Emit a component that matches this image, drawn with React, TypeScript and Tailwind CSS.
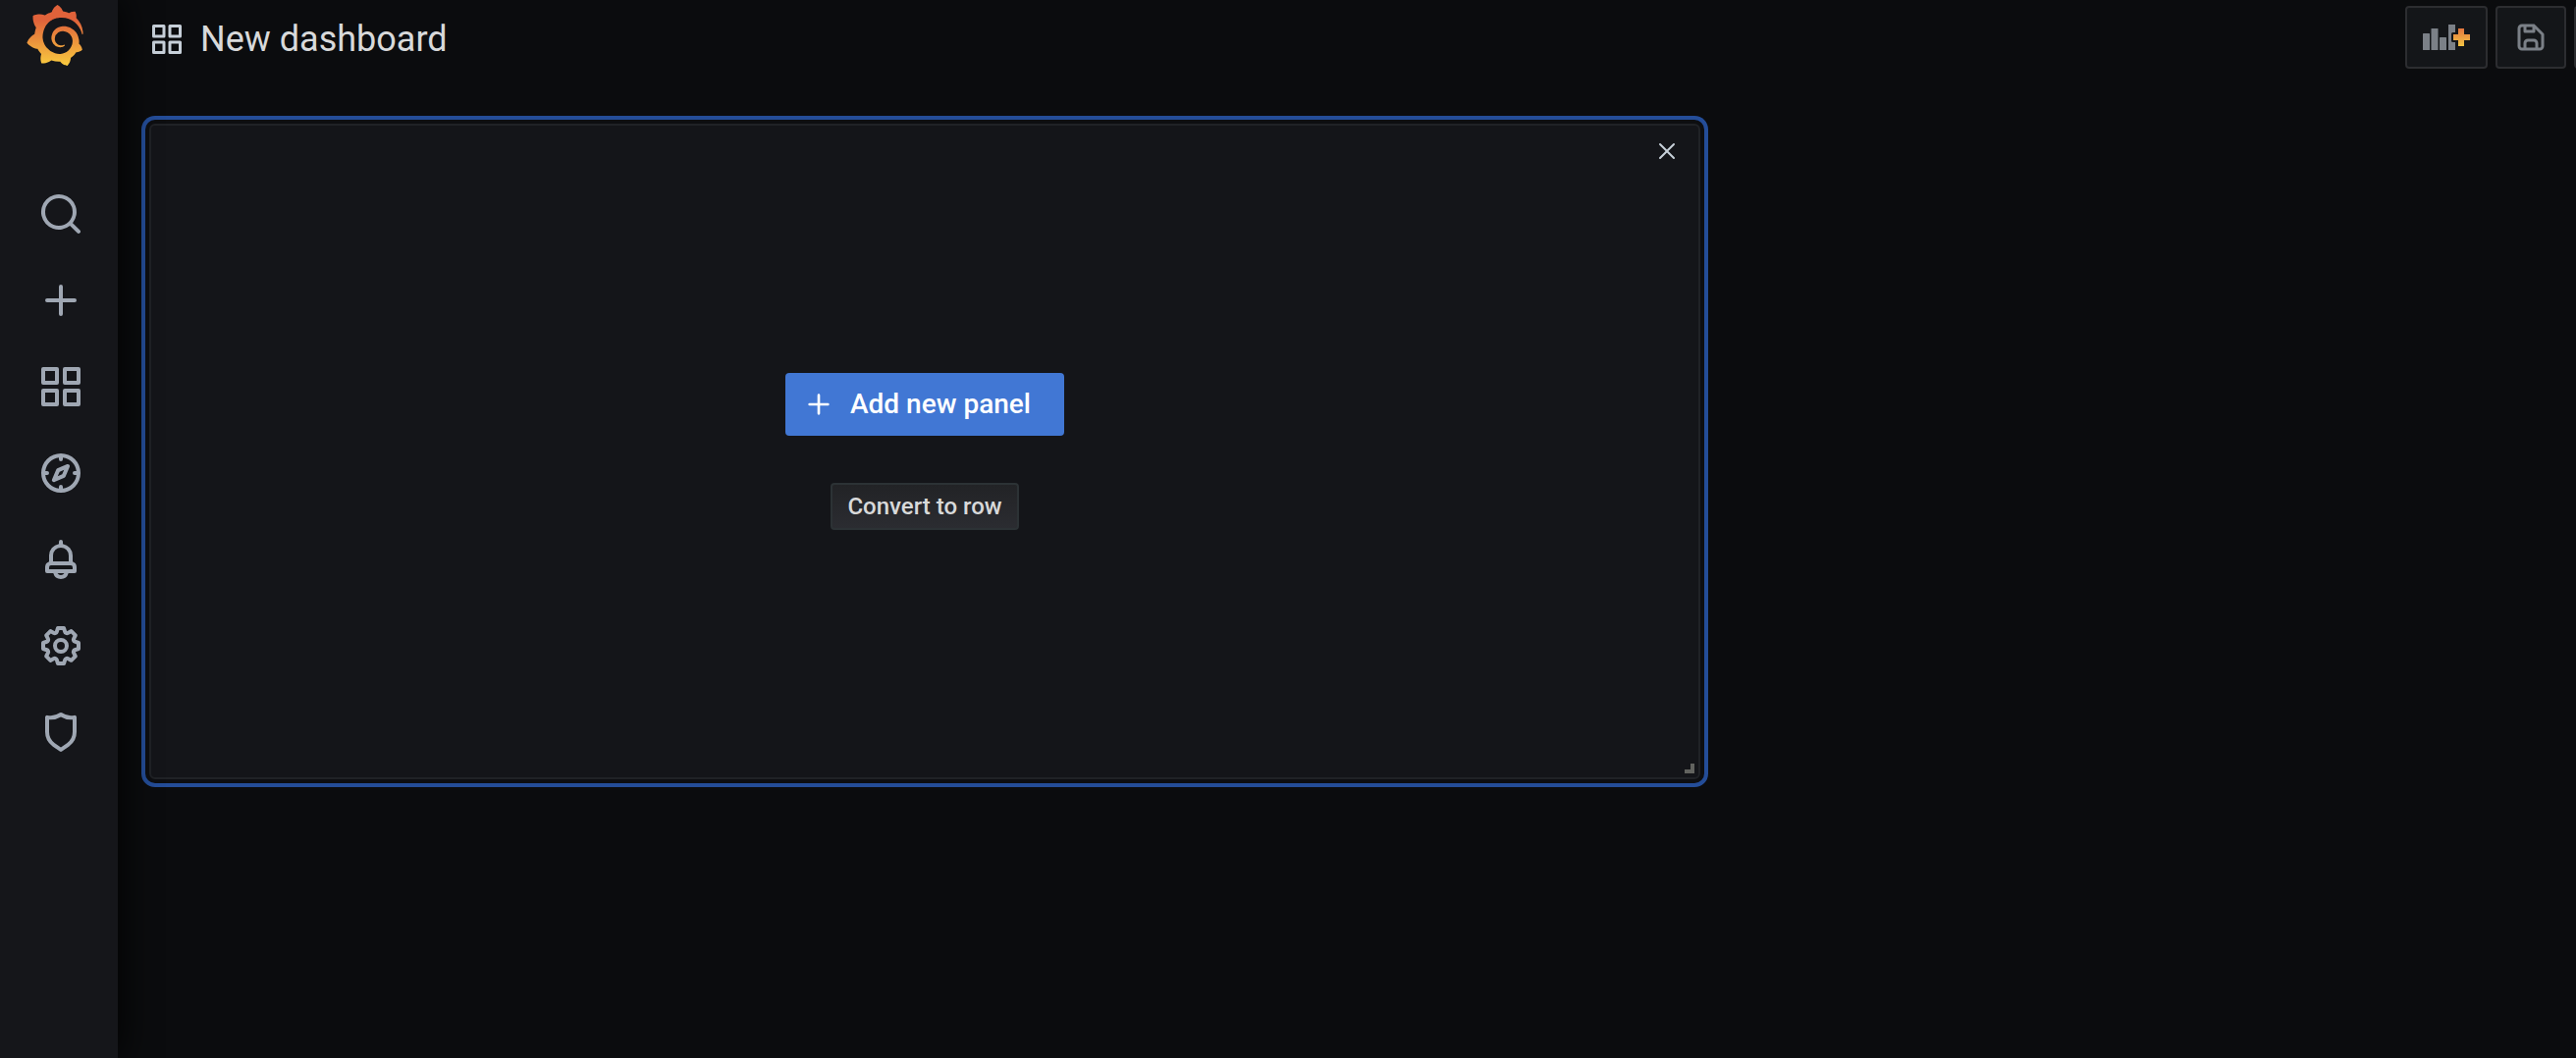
import React from 'react';
import { SiGrafana } from 'react-icons/si';

const icons = {
  search:
    'M21.71,20.29,18,16.61A9,9,0,1,0,16.61,18l3.68,3.68a1,1,0,0,0,1.42,0A1,1,0,0,0,21.71,20.29ZM11,18a7,7,0,1,1,7-7A7,7,0,0,1,11,18Z',
  plus: 'M19,11H13V5a1,1,0,0,0-2,0v6H5a1,1,0,0,0,0,2h6v6a1,1,0,0,0,2,0V13h6a1,1,0,0,0,0-2Z',
  apps: 'M10,13H3a1,1,0,0,0-1,1v7a1,1,0,0,0,1,1h7a1,1,0,0,0,1-1V14A1,1,0,0,0,10,13ZM9,20H4V15H9ZM21,2H14a1,1,0,0,0-1,1v7a1,1,0,0,0,1,1h7a1,1,0,0,0,1-1V3A1,1,0,0,0,21,2ZM20,9H15V4h5Zm1,4H14a1,1,0,0,0-1,1v7a1,1,0,0,0,1,1h7a1,1,0,0,0,1-1V14A1,1,0,0,0,21,13Zm-1,7H15V15h5ZM10,2H3A1,1,0,0,0,2,3v7a1,1,0,0,0,1,1h7a1,1,0,0,0,1-1V3A1,1,0,0,0,10,2ZM9,9H4V4H9Z',
  compass:
    'M12,2A10,10,0,1,0,22,12,10,10,0,0,0,12,2Zm1,17.93V19a1,1,0,0,0-2,0v.93A8,8,0,0,1,4.07,13H5a1,1,0,0,0,0-2H4.07A8,8,0,0,1,11,4.07V5a1,1,0,0,0,2,0V4.07A8,8,0,0,1,19.93,11H19a1,1,0,0,0,0,2h.93A8,8,0,0,1,13,19.93ZM15.14,7.55l-5,2.12a1,1,0,0,0-.52.52l-2.12,5a1,1,0,0,0,.21,1.1,1,1,0,0,0,.7.3.93.93,0,0,0,.4-.09l5-2.12a1,1,0,0,0,.52-.52l2.12-5a1,1,0,0,0-1.31-1.31Zm-2.49,5.1-2.28,1,1-2.28,2.28-1Z',
  bell: 'M18,13.18V10a6,6,0,0,0-5-5.91V3a1,1,0,0,0-2,0V4.09A6,6,0,0,0,6,10v3.18A3,3,0,0,0,4,16v2a1,1,0,0,0,1,1H8.14a4,4,0,0,0,7.72,0H19a1,1,0,0,0,1-1V16A3,3,0,0,0,18,13.18ZM8,10a4,4,0,0,1,8,0v3H8Zm4,10a2,2,0,0,1-1.72-1h3.44A2,2,0,0,1,12,20Zm6-3H6V16a1,1,0,0,1,1-1H17a1,1,0,0,1,1,1Z',
  cog: 'M21.32,9.55l-1.89-.63.89-1.78A1,1,0,0,0,20.13,6L18,3.87a1,1,0,0,0-1.15-.19l-1.78.89-.63-1.89A1,1,0,0,0,13.5,2h-3a1,1,0,0,0-.95.68L8.92,4.57,7.14,3.68A1,1,0,0,0,6,3.87L3.87,6a1,1,0,0,0-.19,1.15l.89,1.78-1.89.63A1,1,0,0,0,2,10.5v3a1,1,0,0,0,.68.95l1.89.63-.89,1.78A1,1,0,0,0,3.87,18L6,20.13a1,1,0,0,0,1.15.19l1.78-.89.63,1.89a1,1,0,0,0,.95.68h3a1,1,0,0,0,.95-.68l.63-1.89,1.78.89A1,1,0,0,0,18,20.13L20.13,18a1,1,0,0,0,.19-1.15l-.89-1.78,1.89-.63A1,1,0,0,0,22,13.5v-3A1,1,0,0,0,21.32,9.55ZM20,12.78l-1.2.4A2,2,0,0,0,17.64,16l.57,1.14-1.1,1.1L16,17.64a2,2,0,0,0-2.79,1.16l-.4,1.2H11.22l-.4-1.2A2,2,0,0,0,8,17.64l-1.14.57-1.1-1.1L6.36,16A2,2,0,0,0,5.2,13.18L4,12.78V11.22l1.2-.4A2,2,0,0,0,6.36,8L5.79,6.89l1.1-1.1L8,6.36A2,2,0,0,0,10.82,5.2l.4-1.2h1.56l.4,1.2A2,2,0,0,0,16,6.36l1.14-.57,1.1,1.1L17.64,8a2,2,0,0,0,1.16,2.79l1.2.4ZM12,8a4,4,0,1,0,4,4A4,4,0,0,0,12,8Zm0,6a2,2,0,1,1,2-2A2,2,0,0,1,12,14Z',
  shield:
    'M19.63,3.65a1,1,0,0,0-.84-.2,8,8,0,0,1-6.22-1.27,1,1,0,0,0-1.14,0A8,8,0,0,1,5.21,3.45a1,1,0,0,0-.84.2A1,1,0,0,0,4,4.43v7.45a9,9,0,0,0,3.77,7.33l3.65,2.6a1,1,0,0,0,1.16,0l3.65-2.6A9,9,0,0,0,20,11.88V4.43A1,1,0,0,0,19.63,3.65ZM18,11.88a7,7,0,0,1-2.93,5.7L12,19.77,8.93,17.58A7,7,0,0,1,6,11.88V5.58a10,10,0,0,0,6-1.39,10,10,0,0,0,6,1.39Z',
  save: 'M20.71,9.29l-6-6a1,1,0,0,0-.32-.21A1.09,1.09,0,0,0,14,3H6A3,3,0,0,0,3,6V18a3,3,0,0,0,3,3H18a3,3,0,0,0,3-3V10A1,1,0,0,0,20.71,9.29ZM9,5h4V7H9Zm6,14H9V16a1,1,0,0,1,1-1h4a1,1,0,0,1,1,1Zm4-1a1,1,0,0,1-1,1H17V16a3,3,0,0,0-3-3H10a3,3,0,0,0-3,3v3H6a1,1,0,0,1-1-1V6A1,1,0,0,1,6,5H7V8A1,1,0,0,0,8,9h6a1,1,0,0,0,1-1V6.41l4,4Z',
  times:
    'M13.41,12l6.3-6.29a1,1,0,1,0-1.42-1.42L12,10.59,5.71,4.29A1,1,0,0,0,4.29,5.71L10.59,12l-6.3,6.29a1,1,0,0,0,0,1.42,1,1,0,0,0,1.42,0L12,13.41l6.29,6.3a1,1,0,0,0,1.42,0,1,1,0,0,0,0-1.42Z',
};

type IconName = keyof typeof icons;

const Icon: React.FC<{ name: IconName; className?: string }> = ({ name, className }) => (
  <svg viewBox="0 0 24 24" fill="currentColor" aria-hidden="true" className={className}>
    <path d={icons[name]} />
  </svg>
);

const navItems: { icon: IconName; label: string }[] = [
  { icon: 'search', label: 'Search' },
  { icon: 'plus', label: 'Create' },
  { icon: 'apps', label: 'Dashboards' },
  { icon: 'compass', label: 'Explore' },
  { icon: 'bell', label: 'Alerting' },
  { icon: 'cog', label: 'Configuration' },
  { icon: 'shield', label: 'Server Admin' },
];

const Sidebar: React.FC = () => (
  <aside className="relative z-10 flex w-30 flex-none flex-col bg-[#15161a] shadow-[0_0_40px_#000]">
    <a href="#" aria-label="Home" className="flex justify-center pt-[5px] pr-2">
      <svg className="absolute size-0" aria-hidden="true">
        <linearGradient id="logo-fill" x1="0" y1="0" x2="0" y2="1">
          <stop offset="0.25" stopColor="#e0623a" />
          <stop offset="1" stopColor="#f9cb3f" />
        </linearGradient>
      </svg>
      <SiGrafana size={62} fill="url(#logo-fill)" />
    </a>
    <nav className="mt-[107px] flex flex-col pl-1">
      {navItems.map((item) => (
        <a
          key={item.icon}
          href="#"
          aria-label={item.label}
          className="flex h-22 items-center justify-center text-[#9fa7b3]"
        >
          <Icon name={item.icon} className="size-12" />
        </a>
      ))}
    </nav>
  </aside>
);

const AddPanelIcon: React.FC = () => (
  <svg width="48" height="26" viewBox="0 0 48 26" aria-hidden="true">
    <linearGradient id="plus-fill" x1="0" y1="0" x2="0" y2="1">
      <stop offset="0" stopColor="#e2763f" />
      <stop offset="1" stopColor="#f3c544" />
    </linearGradient>
    <g fill="#7b8087">
      <rect x="0" y="9" width="7" height="17" rx="0.5" />
      <rect x="8.5" y="4" width="7" height="22" rx="0.5" />
      <rect x="17" y="13" width="7" height="13" rx="0.5" />
      <path d="M26 0h7v8h-2.500q-1.500 0-1.500 1.500v7q0 1.500 1.500 1.500h2.500v8h-7z" />
    </g>
    <path d="M36 4h6v6h6v6h-6v6h-6v-6h-5v-6h5z" fill="url(#plus-fill)" />
  </svg>
);

const Header: React.FC = () => (
  <header className="flex h-[76px] items-center justify-between overflow-hidden pl-8">
    <div className="flex items-center gap-4 pt-1">
      <Icon name="apps" className="size-9 text-[#c7d0d9]" />
      <h1 className="text-4xl text-[#d8d9da]">New dashboard</h1>
    </div>
    {/* the last button runs off the edge of the toolbar */}
    <div className="-mr-[70px] flex gap-2">
      <button
        aria-label="Add panel"
        className="flex h-16 w-21 items-center justify-center rounded border-2 border-[#2c2d30] bg-[#141619]"
      >
        <AddPanelIcon />
      </button>
      <button
        aria-label="Save dashboard"
        className="flex h-16 w-18 items-center justify-center rounded border-2 border-[#2c2d30] bg-[#141619] text-[#7b8087]"
      >
        <Icon name="save" className="size-9" />
      </button>
      <button
        aria-label="Dashboard settings"
        className="flex h-16 w-18 items-center justify-center rounded border-2 border-[#2c2d30] bg-[#141619] text-[#7b8087]"
      >
        <Icon name="cog" className="size-9" />
      </button>
    </div>
  </header>
);

const AddPanelWidget: React.FC = () => (
  <section className="flex min-h-[668px] flex-col rounded-md border-2 border-[#202226] bg-[#141519] shadow-[0_0_0_4px_#0d0e11,0_0_0_8px_#244d98]">
    <div className="flex justify-end px-5 pt-3.5">
      <button aria-label="Close" className="text-[#c7d0d9]">
        <Icon name="times" className="size-6" />
      </button>
    </div>
    <div className="flex flex-1 flex-col items-center justify-center gap-12">
      <button className="flex h-16 items-center gap-4 rounded bg-[#4177d4] pr-[34px] pl-[18px] text-[28px] font-medium text-white">
        <Icon name="plus" className="size-8" />
        Add new panel
      </button>
      <button className="flex h-12 items-center rounded border-2 border-[#2c3235] bg-linear-to-b from-[#222326] to-[#2b2c31] px-[15px] text-2xl font-medium text-[#d8d9da]">
        Convert to row
      </button>
    </div>
    <div className="flex h-[38px] items-end justify-end p-1">
      <span className="size-2.5 cursor-se-resize border-r-4 border-b-4 border-[#62635f]" />
    </div>
  </section>
);

export default function App() {
  return (
    <div className="flex min-h-screen bg-[#0b0c0e] font-['Roboto','Liberation_Sans',sans-serif]">
      <Sidebar />
      <div className="flex min-w-0 flex-1 flex-col">
        <Header />
        <main className="grid grid-cols-[79fr_43fr] px-8 py-[50px]">
          <AddPanelWidget />
        </main>
      </div>
    </div>
  );
}
